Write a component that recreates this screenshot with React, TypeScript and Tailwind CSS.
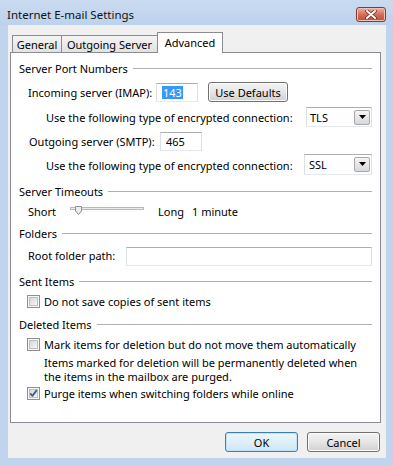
import React from 'react';

const GroupHeader = ({ label }: { label: string }) => (
  <div className="flex h-[20px] items-center">
    <span>{label}</span>
    <div className="ml-[5px] h-px flex-1 bg-[#b0b0b0]" />
  </div>
);

const CheckBox = ({ checked = false }: { checked?: boolean }) => (
  <svg width="13" height="13" viewBox="0 0 13 13" className="shrink-0">
    <defs>
      <linearGradient id="cbFill" x1="0" y1="0" x2="1" y2="1">
        <stop offset="0" stopColor="#d3d6da" />
        <stop offset="1" stopColor="#f8f8f8" />
      </linearGradient>
    </defs>
    <rect x="0.5" y="0.5" width="12" height="12" fill="#f7f7f7" stroke="#8f8f8f" />
    <rect x="2.5" y="2.5" width="8" height="8" fill="url(#cbFill)" stroke="#bcbfc3" />
    {checked && (
      <path d="M3.2 6.4 L5.4 8.8 L9.8 3.2" stroke="#4b5f8f" strokeWidth="1.9" fill="none" strokeLinejoin="round" />
    )}
  </svg>
);

const DropButton = () => (
  <div className="flex h-[15px] w-[16px] items-center justify-center rounded-[2px] border border-[#a8a8a8] bg-gradient-to-b from-[#f5f5f5] to-[#d8d8d8]">
    <svg width="7" height="4" viewBox="0 0 7 4">
      <path d="M0 0 H7 L3.5 4 Z" fill="#000" />
    </svg>
  </div>
);

const Slider = () => (
  <svg width="74" height="12" viewBox="0 0 74 12">
    <rect x="0.5" y="2.5" width="73" height="2" fill="#e9ebec" stroke="#b8babc" />
    <path d="M5.5 1.5 H11.5 V6 L8.5 9.5 L5.5 6 Z" fill="#eeeeee" stroke="#8c8f93" />
  </svg>
);

const TextBox = ({ className, children }: { className: string; children?: React.ReactNode }) => (
  <div className={`flex items-center border border-[#abadb3] border-l-[#dbdfe6] border-r-[#dbdfe6] border-b-[#e3e9ef] bg-white ${className}`}>
    {children}
  </div>
);

const WinButton = ({ label, primary = false }: { label: string; primary?: boolean }) => (
  <div
    className={`flex h-[20px] items-center justify-center rounded-[3px] border ${
      primary
        ? 'border-[#3c7fb1] bg-gradient-to-b from-[#eef7fc] to-[#cfe6f5] shadow-[inset_0_0_0_1px_#bfe4f7]'
        : 'border-[#707070] bg-gradient-to-b from-[#f3f3f3] via-[#e6e6e6] to-[#d0d0d0] shadow-[inset_0_0_0_1px_#fbfbfb]'
    }`}
  >
    {label}
  </div>
);

export default function App() {
  return (
    <div className="flex h-[466px] w-[393px] flex-col bg-[#c0d5ed] font-['Noto_Sans','Open_Sans',sans-serif] text-[11px] leading-none text-black">
      {/* title bar */}
      <div className="flex h-[25px] items-center justify-between bg-gradient-to-b from-[#cadbf0] to-[#bcd2ec] pl-[7px] pr-[7px] pt-[4px]">
        <span className="text-[11.5px] text-[#111]">Internet E-mail Settings</span>
        <div className="flex h-[15px] w-[30px] shrink-0 items-center justify-center rounded-[3px] border border-[#873b2a] bg-gradient-to-b from-[#eab1a3] via-[#d56f5a] to-[#c9482e] shadow-[inset_0_0_0_1px_#f0c2b6]">
          <svg width="12" height="9" viewBox="0 0 12 9">
            <path d="M2 1 L10 8 M10 1 L2 8" stroke="#6b2418" strokeWidth="3.4" strokeLinecap="round" />
            <path d="M2 1 L10 8 M10 1 L2 8" stroke="#ffffff" strokeWidth="2" strokeLinecap="round" />
          </svg>
        </div>
      </div>

      {/* client area */}
      <div className="mb-[8px] ml-[8px] mr-[7px] flex flex-1 flex-col bg-[#f0f0f0] pl-[2px] pr-[5px] pt-[7px] pb-[6px]">
        {/* tabs */}
        <div className="flex h-[20px] items-end pl-[2px]">
          <div className="flex h-[17px] w-[50px] items-center justify-center border-l border-r border-t border-[#898c95] bg-gradient-to-b from-[#f4f4f4] to-[#e2e2e2]">
            General
          </div>
          <div className="flex h-[17px] w-[96px] items-center justify-center border-r border-t border-[#898c95] bg-gradient-to-b from-[#f4f4f4] to-[#e2e2e2]">
            Outgoing Server
          </div>
          <div className="relative z-10 -mb-px -ml-px flex h-[21px] w-[66px] items-center justify-center border-l border-r border-t border-[#898c95] bg-white pb-[2px]">
            Advanced
          </div>
        </div>

        {/* panel */}
        <div className="flex h-[371px] flex-col border border-[#898c95] bg-white pl-[8px] pr-[8px] pt-[5px]">
          <GroupHeader label="Server Port Numbers" />

          <div className="mt-[4px] flex h-[20px] items-center pl-[9px]">
            <span className="w-[128px]">Incoming server (IMAP):</span>
            <TextBox className="h-[19px] w-[42px] pl-[5px]">
              <span className="bg-[#3399ff] px-px py-[1px] text-white">143</span>
            </TextBox>
            <div className="ml-[10px] w-[80px]">
              <WinButton label="Use Defaults" />
            </div>
          </div>

          <div className="mt-[5px] flex h-[20px] items-center justify-between pl-[27px]">
            <span>Use the following type of encrypted connection:</span>
            <TextBox className="h-[20px] w-[66px] justify-between pl-[3px] pr-px">
              <span>TLS</span>
              <DropButton />
            </TextBox>
          </div>

          <div className="mt-[4px] flex h-[20px] items-center pl-[10px]">
            <span className="w-[131px]">Outgoing server (SMTP):</span>
            <TextBox className="h-[19px] w-[42px] pl-[5px]">
              <span>465</span>
            </TextBox>
          </div>

          <div className="mt-[2px] flex h-[22px] items-center justify-between pl-[27px]">
            <span className="mt-[3px]">Use the following type of encrypted connection:</span>
            <TextBox className="h-[21px] w-[68px] justify-between pl-[4px] pr-px">
              <span>SSL</span>
              <DropButton />
            </TextBox>
          </div>

          <div className="mt-[6px]">
            <GroupHeader label="Server Timeouts" />
          </div>

          <div className="flex h-[20px] items-center pl-[9px]">
            <span className="w-[42px]">Short</span>
            <Slider />
            <span className="ml-[14px] w-[34px]">Long</span>
            <span>1 minute</span>
          </div>

          <div className="mt-[2px]">
            <GroupHeader label="Folders" />
          </div>

          <div className="mt-[3px] flex h-[20px] items-center pl-[9px]">
            <span className="mb-[2px] w-[98px]">Root folder path:</span>
            <TextBox className="h-[19px] flex-1" />
          </div>

          <div className="mt-[5px]">
            <GroupHeader label="Sent Items" />
          </div>

          <div className="flex h-[20px] items-center gap-[4px] pl-[8px]">
            <CheckBox />
            <span>Do not save copies of sent items</span>
          </div>

          <div className="mt-[3px]">
            <GroupHeader label="Deleted Items" />
          </div>

          <div className="flex h-[20px] items-center gap-[4px] pl-[8px]">
            <CheckBox />
            <span>Mark items for deletion but do not move them automatically</span>
          </div>

          <div className="mt-[2px] flex h-[27px] flex-col justify-center pl-[25px] leading-[13.5px]">
            <span>Items marked for deletion will be permanently deleted when</span>
            <span>the items in the mailbox are purged.</span>
          </div>

          <div className="flex h-[20px] items-center gap-[4px] pl-[8px]">
            <CheckBox checked />
            <span>Purge items when switching folders while online</span>
          </div>
        </div>

        {/* buttons */}
        <div className="mt-[9px] flex justify-end gap-[9px] pr-px">
          <div className="w-[73px]">
            <WinButton label="OK" primary />
          </div>
          <div className="w-[73px]">
            <WinButton label="Cancel" />
          </div>
        </div>
      </div>
    </div>
  );
}
